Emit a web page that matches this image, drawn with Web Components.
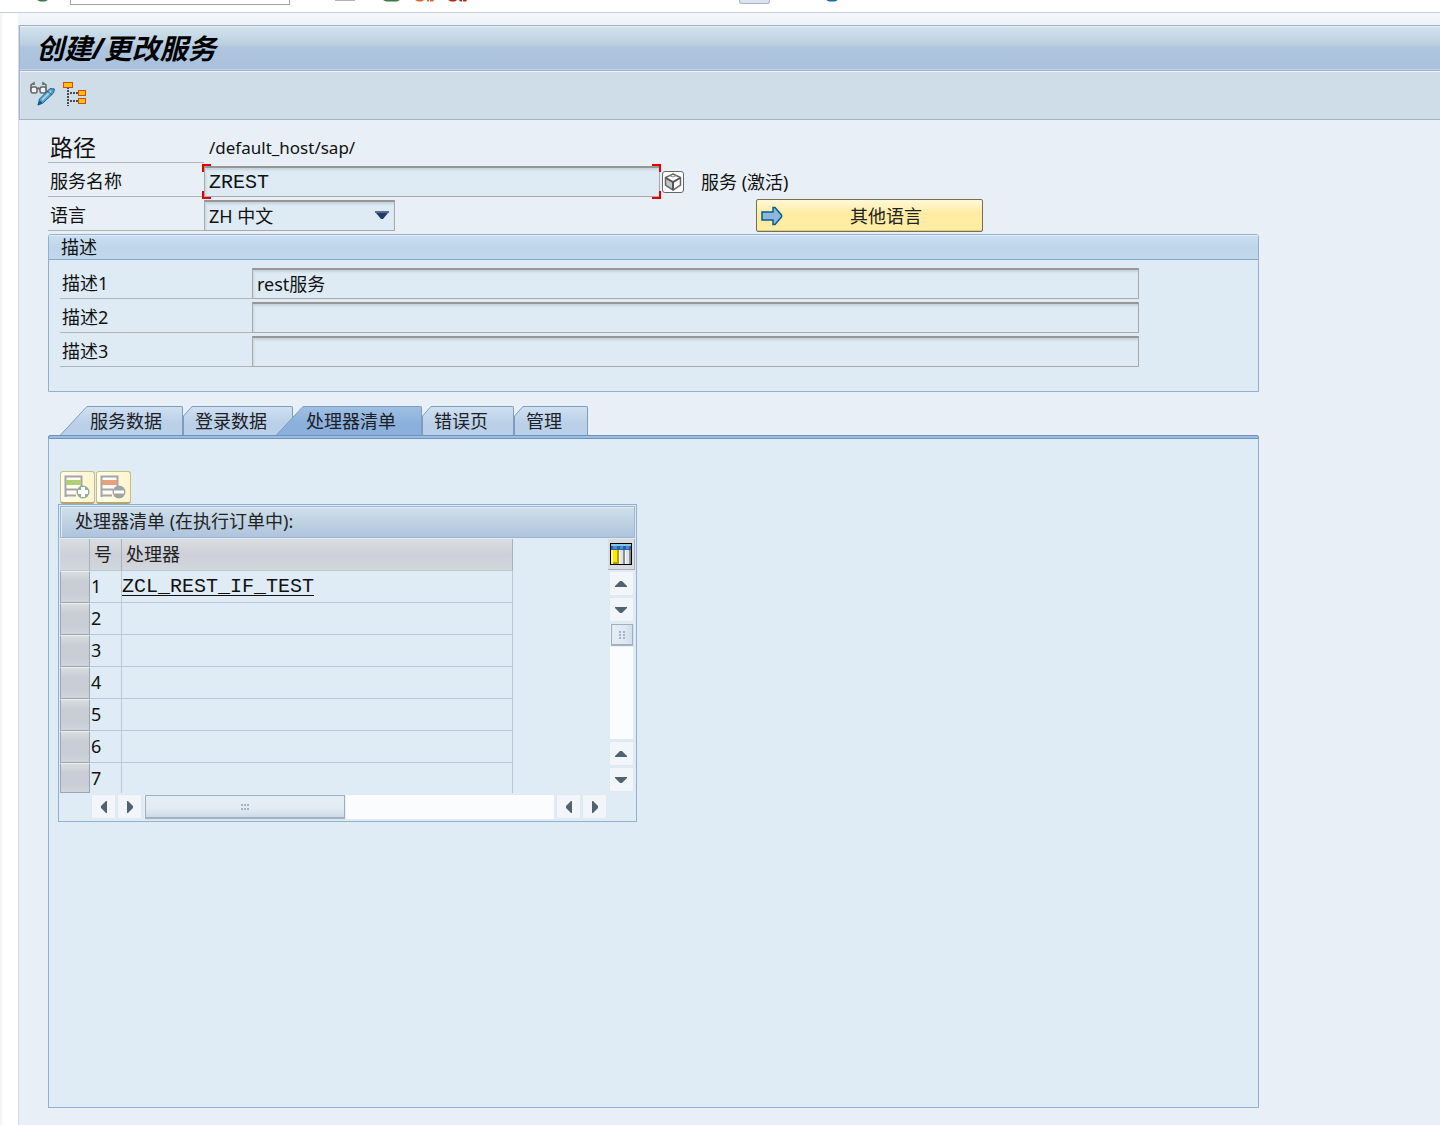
<!DOCTYPE html>
<html lang="zh-CN">
<head>
<meta charset="utf-8">
<title>创建/更改服务</title>
<style>
    html, body {
        margin: 0;
        padding: 0;
    }

    body {
        font: 18px/24px "Noto Sans", "Noto Sans CJK SC", sans-serif;
        color: #111;
        background: #fff;
    }
</style>
</head>
<body>
<service-app>
    <command-strip slot="command"></command-strip>
    <page-title slot="title">创建/更改服务</page-title>
    <app-toolbar slot="toolbar"></app-toolbar>

    <service-header></service-header>

    <group-panel heading="描述">
        <text-row label="描述1" value="rest服务"></text-row>
        <text-row label="描述2"></text-row>
        <text-row label="描述3"></text-row>
    </group-panel>

    <tab-panel>
        <tab-item slot="tabs" first>服务数据</tab-item>
        <tab-item slot="tabs">登录数据</tab-item>
        <tab-item slot="tabs" active>处理器清单</tab-item>
        <tab-item slot="tabs">错误页</tab-item>
        <tab-item slot="tabs">管理</tab-item>
        <handler-list heading="处理器清单 (在执行订单中):" handlers="ZCL_REST_IF_TEST" rows="7"></handler-list>
    </tab-panel>
</service-app>

<script>
// Attaches an open shadow root and fills it with the given markup
function render(el, html) {
    el.attachShadow({ mode: 'open' }).innerHTML = html;
}

// Page frame: command strip on top, white gutter on the left, work area
class ServiceApp extends HTMLElement {
    constructor() {
        super();
        render(this, `
            <style>
                :host {
                    display: flex;
                    flex-direction: column;
                    min-height: 100vh;
                }
                .body {
                    flex: 1;
                    display: flex;
                    padding: 12px 0 0 18px;
                    background:
                        linear-gradient(#f5f7fc, #edf3f8) 18px 0 / 100% 12px no-repeat,
                        linear-gradient(90deg, #f2f2f4, #fff 4px);
                }
                main {
                    flex: 1;
                    min-width: 0;
                    display: flex;
                    flex-direction: column;
                    border-left: 1px solid #d3d9e6;
                    background: #e8eff6;
                }
                .content {
                    flex: 1;
                    display: flex;
                    flex-direction: column;
                    padding: 12px 181px 17px 29px;
                }
            </style>
            <slot name="command"></slot>
            <div class="body">
                <main>
                    <slot name="title"></slot>
                    <slot name="toolbar"></slot>
                    <div class="content"><slot></slot></div>
                </main>
            </div>
        `);
    }
}

// Lower edge of the command bar, scrolled out of view
class CommandStrip extends HTMLElement {
    constructor() {
        super();
        render(this, `
            <style>
                :host {
                    display: flex;
                    align-items: flex-start;
                    height: 12px;
                    padding-left: 36px;
                    overflow: hidden;
                    background: #fff;
                    border-bottom: 1px solid #c8ccde;
                }
                svg { display: block; flex: none; }
                input {
                    box-sizing: border-box;
                    width: 220px;
                    height: 5px;
                    margin: 0 45px 0 21px;
                    padding: 0;
                    border: 1px solid #a3a3a3;
                    border-top: 0;
                    background: #fff;
                }
                button {
                    width: 31px;
                    height: 4px;
                    margin: 0 56px 0 272px;
                    padding: 0;
                    border: 1px solid #a9b1cb;
                    border-top: 0;
                    border-radius: 0 0 3px 3px;
                    background: #dde3ee;
                }
            </style>
            <svg width="13" height="2"><path d="M1 0h11l-3 1.400H4z" fill="#3c7a45"/></svg>
            <input type="text" aria-label="命令">
            <svg width="132" height="2">
                <path d="M0 0h20v1H0z" fill="#b4b4b4"/>
                <path d="M48 0h17l-3 1.400H51z" fill="#3c7a45"/>
                <path d="M80 0h9l-2 1.400h-4zM92 0h2v1.400h-2zM95 0h4l-1 1.400h-3z" fill="#e4622a"/>
                <path d="M113 0h9l-2 1.400h-4zM124 0h3v1.400h-2zM128 0h4l-1 1.400h-3z" fill="#b52a16"/>
            </svg>
            <button type="button" aria-label="布局"></button>
            <svg width="13" height="2"><path d="M0 0h12l-3 1.400H3z" fill="#1c6f9f"/></svg>
        `);
    }
}

class PageTitle extends HTMLElement {
    constructor() {
        super();
        render(this, `
            <style>
                :host {
                    display: block;
                    border-top: 1px solid #9db0c8;
                    border-bottom: 1px solid #9fb2cf;
                    border-left: 1px solid #a3b2ca;
                }
                h1 {
                    margin: 0;
                    padding-left: 16px;
                    font-size: 28px;
                    line-height: 42px;
                    font-style: italic;
                    font-weight: bold;
                    color: #000;
                    border-top: 1px solid #e6eff6;
                    border-bottom: 1px solid #c3d2e6;
                    background: linear-gradient(#d2e2ee, #bdd0df 40%, #adc5de 50%, #abc1db);
                }
            </style>
            <h1><slot></slot></h1>
        `);
    }
}

class AppToolbar extends HTMLElement {
    constructor() {
        super();
        render(this, `
            <style>
                :host {
                    display: flex;
                    align-items: center;
                    gap: 8px;
                    height: 44px;
                    padding: 0 0 4px 10px;
                    border: solid #a3b2ca;
                    border-width: 0 0 1px 1px;
                    background: #cfdde8;
                    box-shadow: inset 0 1px #edf4f9, inset 1px 0 #dbe6ef;
                }
                button {
                    padding: 0;
                    border: 0;
                    background: none;
                }
                svg { display: block; }
            </style>
            <button type="button" aria-label="显示/更改">
                <svg width="25" height="25" viewBox="0 0 25 25">
                    <g fill="#f2f3f4" stroke="#656565" stroke-width="1.500">
                        <path d="M1 10V4l3-2v2M16 10V4l-3-2v2" fill="none"/>
                        <rect x="1" y="6" width="6" height="6" rx="2"/>
                        <rect x="10" y="6" width="6" height="6" rx="2"/>
                        <path d="M7 8.500l1.500-1.500L10 8.500" fill="none"/>
                    </g>
                    <path d="M8 24l1.500-6L20 7.500l4.500.5-1 4L13 22z" fill="#5c9cc3" stroke="#146a9b"/>
                    <path d="M12 19l9-9" stroke="#a7d0e7" stroke-width="2"/>
                    <path d="M17 10l5 4M8 24l2-4 2 2z" stroke="#175d89" fill="#175d89"/>
                </svg>
            </button>
            <button type="button" aria-label="层次结构">
                <svg width="24" height="25" viewBox="0 0 24 25" shape-rendering="crispEdges">
                    <path d="M5 6v19M7 12h9M7 20h9" stroke="#4a4a4a" stroke-width="2" stroke-dasharray="2 1" fill="none"/>
                    <path d="M0 1h10v6H0zM15 9h8v6h-8zM15 17h8v6h-8z" fill="#cf4a1c"/>
                    <path d="M1 2h8v4H1zM16 10h6v4h-6zM16 18h6v4h-6z" fill="#fdc300"/>
                </svg>
            </button>
        `);
    }
}

const fieldStyles = `
    input, select {
        box-sizing: border-box;
        height: 31px;
        margin: 0;
        padding: 0 4px 2px;
        font: inherit;
        color: inherit;
        border: 1px solid #a9a9a9;
        border-top: 2px solid #969696;
        border-radius: 0;
        outline: 0;
        background: #deeaf4;
        box-shadow: inset 1px 2px 2px #c6d4de;
    }
    label, .label {
        box-sizing: border-box;
        flex: none;
        height: 31px;
        line-height: 30px;
        padding-left: 2px;
        border-bottom: 1px solid #b1b5b8;
        white-space: nowrap;
    }
`;

// Path, service name and language of the service being edited
class ServiceHeader extends HTMLElement {
    constructor() {
        super();
        render(this, `
            <style>
                ${fieldStyles}
                :host {
                    display: grid;
                    gap: 3px;
                    margin-bottom: 3px;
                }
                .row {
                    display: flex;
                    align-items: center;
                    height: 31px;
                    line-height: 28px;
                }
                label, .label { width: 156px; }
                .path {
                    font-size: 23px;
                }
                .value {
                    padding-left: 5px;
                    font-size: 17px;
                }
                .name {
                    position: relative;
                    flex: 0 1 456px;
                    display: flex;
                }
                .name input {
                    width: 100%;
                    padding-bottom: 0;
                    font: 20px "Liberation Mono", monospace;
                }
                .name i {
                    position: absolute;
                    width: 7px;
                    height: 6px;
                    border: 0 solid #e00000;
                }
                .tl { top: -2px; left: -2px; }
                .tr { top: -2px; right: -1px; }
                .bl { bottom: -2px; left: -2px; }
                .br { bottom: -2px; right: -1px; }
                .name .tl { border-width: 2px 0 0 2px; }
                .name .tr { border-width: 2px 2px 0 0; }
                .name .bl { border-width: 0 0 2px 2px; }
                .name .br { border-width: 0 2px 2px 0; }
                .status { margin: 0 17px 0 2px; }
                .language {
                    position: relative;
                    width: 191px;
                    margin-right: 361px;
                }
                select {
                    appearance: none;
                    display: block;
                    width: 100%;
                }
                .language svg {
                    position: absolute;
                    top: 11px;
                    right: 6px;
                    pointer-events: none;
                }
                svg { display: block; flex: none; }
                button {
                    display: flex;
                    align-items: center;
                    flex: 0 1 227px;
                    height: 33px;
                    padding: 0 3px;
                    font: inherit;
                    color: #222;
                    border: 1px solid #77704f;
                    border-radius: 2px;
                    background: linear-gradient(#fff8d8, #ffeca1 45%, #feeda5);
                    box-shadow: inset 0 -1px #e0ce85;
                }
                button span {
                    flex: 1;
                    padding-left: 10px;
                }
            </style>
            <div class="row">
                <span class="label path">路径</span>
                <span class="value">/default_host/sap/</span>
            </div>
            <div class="row">
                <label for="name">服务名称</label>
                <span class="name">
                    <input id="name" type="text" value="ZREST">
                    <i class="tl"></i><i class="tr"></i><i class="bl"></i><i class="br"></i>
                </span>
                <svg class="status" width="22" height="22" viewBox="0 0 22 22">
                    <rect x=".5" y=".5" width="21" height="21" rx="2.500" fill="#fff" stroke="#666"/>
                    <path d="M3.500 7L11 11v8l-7.500-5z" fill="#c6c6c6"/>
                    <path d="M11 3l7.500 3.500V14L11 19l-7.500-5V6.500z" fill="none" stroke="#666" stroke-width="1.500"/>
                    <path d="M7.500 4.500L11 6l3.500-1.500" fill="none" stroke="#888"/>
                    <path d="M4 7l7 4 7-4M11 11v8" fill="none" stroke="#555" stroke-width="2"/>
                </svg>
                <span>服务 (激活)</span>
            </div>
            <div class="row">
                <label for="language">语言</label>
                <span class="language">
                    <select id="language"><option>ZH 中文</option></select>
                    <svg width="14" height="8" viewBox="0 0 14 8"><path d="M1 0h12v2L8 8H6L1 2z" fill="#25386a"/><path d="M0 0h14v2H0z" fill="#5b6b90"/></svg>
                </span>
                <button type="button">
                    <svg width="23" height="20" viewBox="0 0 23 20"><path d="M2 6h11V1.500h2L21.500 9v2L15 18.500h-2V14H2z" fill="#8fb6dc" stroke="#075c8c" stroke-width="1.500"/></svg>
                    <span>其他语言</span>
                </button>
            </div>
        `);
    }
}

class GroupPanel extends HTMLElement {
    constructor() {
        super();
        render(this, `
            <style>
                :host {
                    display: block;
                    border: 1px solid #8fb0d0;
                    border-radius: 3px 3px 0 0;
                    background: #deebf5;
                }
                h2 {
                    margin: 0;
                    padding-left: 12px;
                    font-size: 18px;
                    font-weight: normal;
                    line-height: 23px;
                    border-top: 1px solid #e2eef8;
                    border-bottom: 1px solid #86a9cb;
                    border-radius: 2px 2px 0 0;
                    background: linear-gradient(#cadef0, #bfd6ea 50%, #c1d8ed);
                }
                .rows {
                    display: grid;
                    gap: 3px;
                    padding: 8px 119px 24px 11px;
                }
            </style>
            <h2></h2>
            <div class="rows"><slot></slot></div>
        `);
    }

    connectedCallback() {
        this.shadowRoot.querySelector('h2').textContent = this.getAttribute('heading');
    }
}

// Label with a text box beside it
class TextRow extends HTMLElement {
    constructor() {
        super();
        render(this, `
            <style>
                ${fieldStyles}
                :host { display: flex; }
                label { width: 192px; }
                input {
                    flex: 1;
                    min-width: 0;
                }
            </style>
            <label for="field"></label>
            <input id="field" type="text">
        `);
    }

    connectedCallback() {
        this.shadowRoot.querySelector('label').textContent = this.getAttribute('label');
        this.shadowRoot.querySelector('input').value = this.getAttribute('value') || '';
    }
}

class TabPanel extends HTMLElement {
    constructor() {
        super();
        render(this, `
            <style>
                :host {
                    flex: 1;
                    display: flex;
                    flex-direction: column;
                    margin-top: 14px;
                }
                .tabs {
                    display: flex;
                    padding-left: 12px;
                }
                .bar {
                    height: 2px;
                    border: 1px solid #6a93c2;
                    border-radius: 2px 2px 0 0;
                    background: #9dbcdf;
                }
                .panel {
                    flex: 1;
                    padding: 32px 9px;
                    border: 1px solid #8fb0d0;
                    border-top: 0;
                    background: #dfebf5;
                }
            </style>
            <div class="tabs" role="tablist"><slot name="tabs"></slot></div>
            <div class="bar"></div>
            <div class="panel"><slot></slot></div>
        `);
    }
}

// Tab with a slanted left edge. The first and the active tab show the whole
// slant, the others only its upper corner.
class TabItem extends HTMLElement {
    connectedCallback() {
        const active = this.hasAttribute('active');
        const full = active || this.hasAttribute('first');
        const width = full ? 28 : 10;
        const edge = full ? 'M0 29.500L26 1.500Q27 .5 28 .5' : 'M.5 30V10L8 1.500Q9 .5 10 .5';
        const top = active ? '#9fc0e3' : '#cfe0f0';
        const bottom = active ? '#8bb0db' : '#bad0e8';

        render(this, `
            <style>
                :host { display: block; }
                :host([active]) { margin-left: -17px; }
                button {
                    display: flex;
                    height: 29px;
                    padding: 0;
                    font: inherit;
                    color: #1c2026;
                    border: 0;
                    background: none;
                }
                svg { display: block; }
                span {
                    height: 28px;
                    line-height: 28px;
                    padding: 0 25px 0 2px;
                    border: solid #7d9dbf;
                    border-width: 1px 1px 0 0;
                    border-radius: 0 2px 0 0;
                    background: linear-gradient(${top}, ${bottom} 60%);
                }
                :host([first]) span { padding-right: 20px; }
            </style>
            <button type="button" role="tab" aria-selected="${active}">
                <svg width="${width}" height="29">
                    <defs>
                        <linearGradient id="fill" x2="0" y2="1">
                            <stop stop-color="${top}"/>
                            <stop offset=".6" stop-color="${bottom}"/>
                        </linearGradient>
                    </defs>
                    <path d="${edge}V30H0z" fill="url(#fill)"/>
                    <path d="${edge}" fill="none" stroke="#7d9dbf"/>
                </svg>
                <span><slot></slot></span>
            </button>
        `);
    }
}

const arrows = {
    up: 'M0 5l5-5h2l5 5v1H0z',
    down: 'M0 0h12v1L7 6H5L0 1z',
    left: 'M6 0v12H5L0 7V5l5-5z',
    right: 'M0 0h1l5 5v2l-5 5H0z'
};

const arrowNames = { up: '向上', down: '向下', left: '向左', right: '向右' };

function arrowButton(dir) {
    const flat = dir === 'up' || dir === 'down';
    return `
        <button type="button" aria-label="${arrowNames[dir]}">
            <svg width="${flat ? 12 : 6}" height="${flat ? 6 : 12}">
                <path d="${arrows[dir]}" fill="#50636f"/>
            </svg>
        </button>
    `;
}

// Scroll bar with a pair of arrows at both ends
class ScrollTrack extends HTMLElement {
    connectedCallback() {
        const vertical = this.hasAttribute('vertical');
        const pair = vertical
            ? arrowButton('up') + arrowButton('down')
            : arrowButton('left') + arrowButton('right');

        render(this, `
            <style>
                :host {
                    display: flex;
                    gap: 3px;
                    height: 24px;
                }
                :host([vertical]) {
                    flex-direction: column;
                    width: 24px;
                    height: auto;
                }
                button {
                    display: flex;
                    align-items: center;
                    justify-content: center;
                    flex: none;
                    width: 23px;
                    height: 23px;
                    padding: 0;
                    border: 0;
                    background: #f2f6fb;
                    box-shadow: 0 0 1px #d8dfe8;
                }
                .track {
                    flex: 1;
                    padding-left: 1px;
                    background: #fbfcfd;
                }
                .thumb {
                    box-sizing: border-box;
                    display: flex;
                    align-items: center;
                    justify-content: center;
                    width: 49%;
                    height: 23px;
                    border: 1px solid #9dafc0;
                    background: linear-gradient(#e6eef5, #e2ebf3 60%, #cddbe7);
                    box-shadow: 0 1px 1px #aab4bd;
                }
                :host([vertical]) .track { width: 22px; }
                :host([vertical]) .thumb {
                    width: 22px;
                    height: 21px;
                    background: linear-gradient(90deg, #e4edf5, #dfe9f3 60%, #cfdeed);
                }
                svg { display: block; }
            </style>
            ${pair}
            <div class="track">
                <div class="thumb">
                    <svg width="8" height="8" fill="#a4b4c4">
                        ${vertical
                            ? '<path d="M1 0h2v2H1zM1 3h2v2H1zM1 6h2v2H1zM5 0h2v2H5zM5 3h2v2H5zM5 6h2v2H5z"/>'
                            : '<path d="M0 1h2v2H0zM3 1h2v2H3zM6 1h2v2H6zM0 5h2v2H0zM3 5h2v2H3zM6 5h2v2H6z"/>'}
                    </svg>
                </div>
            </div>
            ${pair}
        `);
    }
}

// Editable list of request handlers
class HandlerList extends HTMLElement {
    constructor() {
        super();
        render(this, `
            <style>
                :host { display: block; }
                .tools {
                    display: flex;
                    gap: 1px;
                    padding-left: 2px;
                }
                .tools button {
                    width: 35px;
                    height: 33px;
                    padding: 3px;
                    border: 1px solid #c8bd83;
                    border-bottom: 2px solid #b5a66f;
                    border-radius: 3px;
                    background: linear-gradient(90deg, #fffdee, #fff5cc);
                }
                svg { display: block; }
                .box {
                    box-sizing: border-box;
                    max-width: 579px;
                    border: 1px solid #8fb0d0;
                    padding: 1px;
                }
                h3 {
                    margin: 0 0 1px;
                    padding: 0 0 2px 14px;
                    font-size: 18px;
                    font-weight: normal;
                    line-height: 28px;
                    color: #222;
                    border: 1px solid #9db5cf;
                    background: linear-gradient(#cfe0ed, #bfd2e2 50%, #aec4dd);
                    box-shadow: inset 1px 1px #e3edf5;
                }
                .grid {
                    display: grid;
                    grid-template-columns: 1fr 27px;
                }
                table {
                    width: 453px;
                    border-collapse: separate;
                    border-spacing: 0;
                    table-layout: fixed;
                }
                th, td {
                    box-sizing: border-box;
                    height: 32px;
                    padding: 0 0 1px;
                    text-align: left;
                    font-weight: normal;
                    line-height: 24px;
                    white-space: nowrap;
                    border: solid #b9c7d6;
                    border-width: 0 1px 1px 0;
                }
                thead th {
                    padding-left: 4px;
                    color: #222;
                    border-right-color: #a9b0bd;
                    background: linear-gradient(#dadddf, #cdd0d9 50%, #d2d7da);
                }
                .mark { width: 30px; }
                .no { width: 32px; }
                tbody .mark {
                    border: 1px solid #9aa4b3;
                    border-top-color: #edf0f2;
                    background: linear-gradient(#d9dde0, #c9ced6 30%, #c7ccd5 70%, #d2d6da);
                }
                tbody tr:last-child > * {
                    height: 30px;
                }
                tbody tr:last-child td { border-bottom: 0; }
                tbody .no { padding-left: 1px; }
                a {
                    font: 20px/24px "Liberation Mono", monospace;
                    color: #111;
                    text-decoration: underline 1px;
                    text-underline-offset: 3px;
                    text-decoration-skip-ink: none;
                }
                .side {
                    display: flex;
                    flex-direction: column;
                    align-items: center;
                    padding-bottom: 2px;
                }
                .settings {
                    box-sizing: border-box;
                    width: 27px;
                    height: 31px;
                    margin-bottom: 2px;
                    padding: 3px 2px;
                    border: solid #a9b0bd;
                    border-width: 0 1px 1px 0;
                    background: #dadde0;
                }
                .side scroll-track {
                    flex: 1;
                }
                .bottom {
                    margin: 2px 29px 1px 32px;
                }
            </style>
            <div class="tools">
                <button type="button" aria-label="插入行">
                    <svg width="27" height="25" viewBox="0 0 27 25">
                        <path d="M1 2h17v16H1z" fill="#fcfcf8"/>
                        <path d="M1.500 22V1.500h16V14M1 14.500h12M1 20.500h11" fill="none" stroke="#a6a6a6" stroke-width="2"/>
                        <path d="M2 5h15v5H2z" fill="#b0d073"/>
                        <circle cx="19" cy="17" r="6.500" fill="#8eac99"/>
                        <path d="M19 12v10M14 17h10" stroke="#fff" stroke-width="4"/>
                    </svg>
                </button>
                <button type="button" aria-label="删除行">
                    <svg width="27" height="25" viewBox="0 0 27 25">
                        <path d="M1 2h17v16H1z" fill="#fcfcf8"/>
                        <path d="M1.500 22V1.500h16V14M1 14.500h12M1 20.500h11" fill="none" stroke="#a6a6a6" stroke-width="2"/>
                        <path d="M2 5h15v5H2z" fill="#e79f7c"/>
                        <circle cx="19" cy="17" r="6.500" fill="#a3a3a3"/>
                        <path d="M14 17h10" stroke="#fff" stroke-width="3"/>
                    </svg>
                </button>
            </div>
            <div class="box">
                <h3></h3>
                <div class="grid">
                    <table>
                        <thead>
                            <tr><th class="mark"></th><th class="no">号</th><th>处理器</th></tr>
                        </thead>
                        <tbody></tbody>
                    </table>
                    <div class="side">
                        <button class="settings" type="button" aria-label="表设置">
                            <svg width="22" height="22" viewBox="0 0 22 22" shape-rendering="crispEdges">
                                <path d="M0 0h22v22H0z"/>
                                <path d="M1 1h20v2H1z" fill="#86c9ee"/>
                                <path d="M1 3h20v4H1z" fill="#1767a9"/>
                                <path d="M3 3h4v3H3zM10 3h3v3h-3zM16 3h3v3h-3z" fill="#5f83c4"/>
                                <path d="M1 7h20v14H1z" fill="#fff"/>
                                <path d="M1 7h2v14H1z" fill="#fdf6a4"/>
                                <path d="M3 7h4v12H3z" fill="#ffe800"/>
                                <path d="M7 7h2v14H3v-2h4z" fill="#b1a200"/>
                                <path d="M10 7h3v14h-3zM16 7h3v14h-3z" fill="#dde6ef"/>
                                <path d="M13 7h2v14h-2zM19 7h2v14h-2z" fill="#8b8b8b"/>
                            </svg>
                        </button>
                        <scroll-track vertical></scroll-track>
                    </div>
                </div>
                <scroll-track class="bottom"></scroll-track>
            </div>
        `);
    }

    connectedCallback() {
        this.shadowRoot.querySelector('h3').textContent = this.getAttribute('heading');
        this.renderRows();
    }

    renderRows() {
        const handlers = this.getAttribute('handlers').split(',');
        const count = Number(this.getAttribute('rows'));
        let html = '';

        for (let i = 0; i < count; i++) {
            const link = handlers[i] ? `<a href="#${handlers[i]}">${handlers[i]}</a>` : '';
            html += `<tr><th class="mark"></th><td class="no">${i + 1}</td><td>${link}</td></tr>`;
        }

        this.shadowRoot.querySelector('tbody').innerHTML = html;
    }
}

customElements.define('service-app', ServiceApp);
customElements.define('command-strip', CommandStrip);
customElements.define('page-title', PageTitle);
customElements.define('app-toolbar', AppToolbar);
customElements.define('service-header', ServiceHeader);
customElements.define('group-panel', GroupPanel);
customElements.define('text-row', TextRow);
customElements.define('tab-panel', TabPanel);
customElements.define('tab-item', TabItem);
customElements.define('scroll-track', ScrollTrack);
customElements.define('handler-list', HandlerList);
</script>
</body>
</html>
